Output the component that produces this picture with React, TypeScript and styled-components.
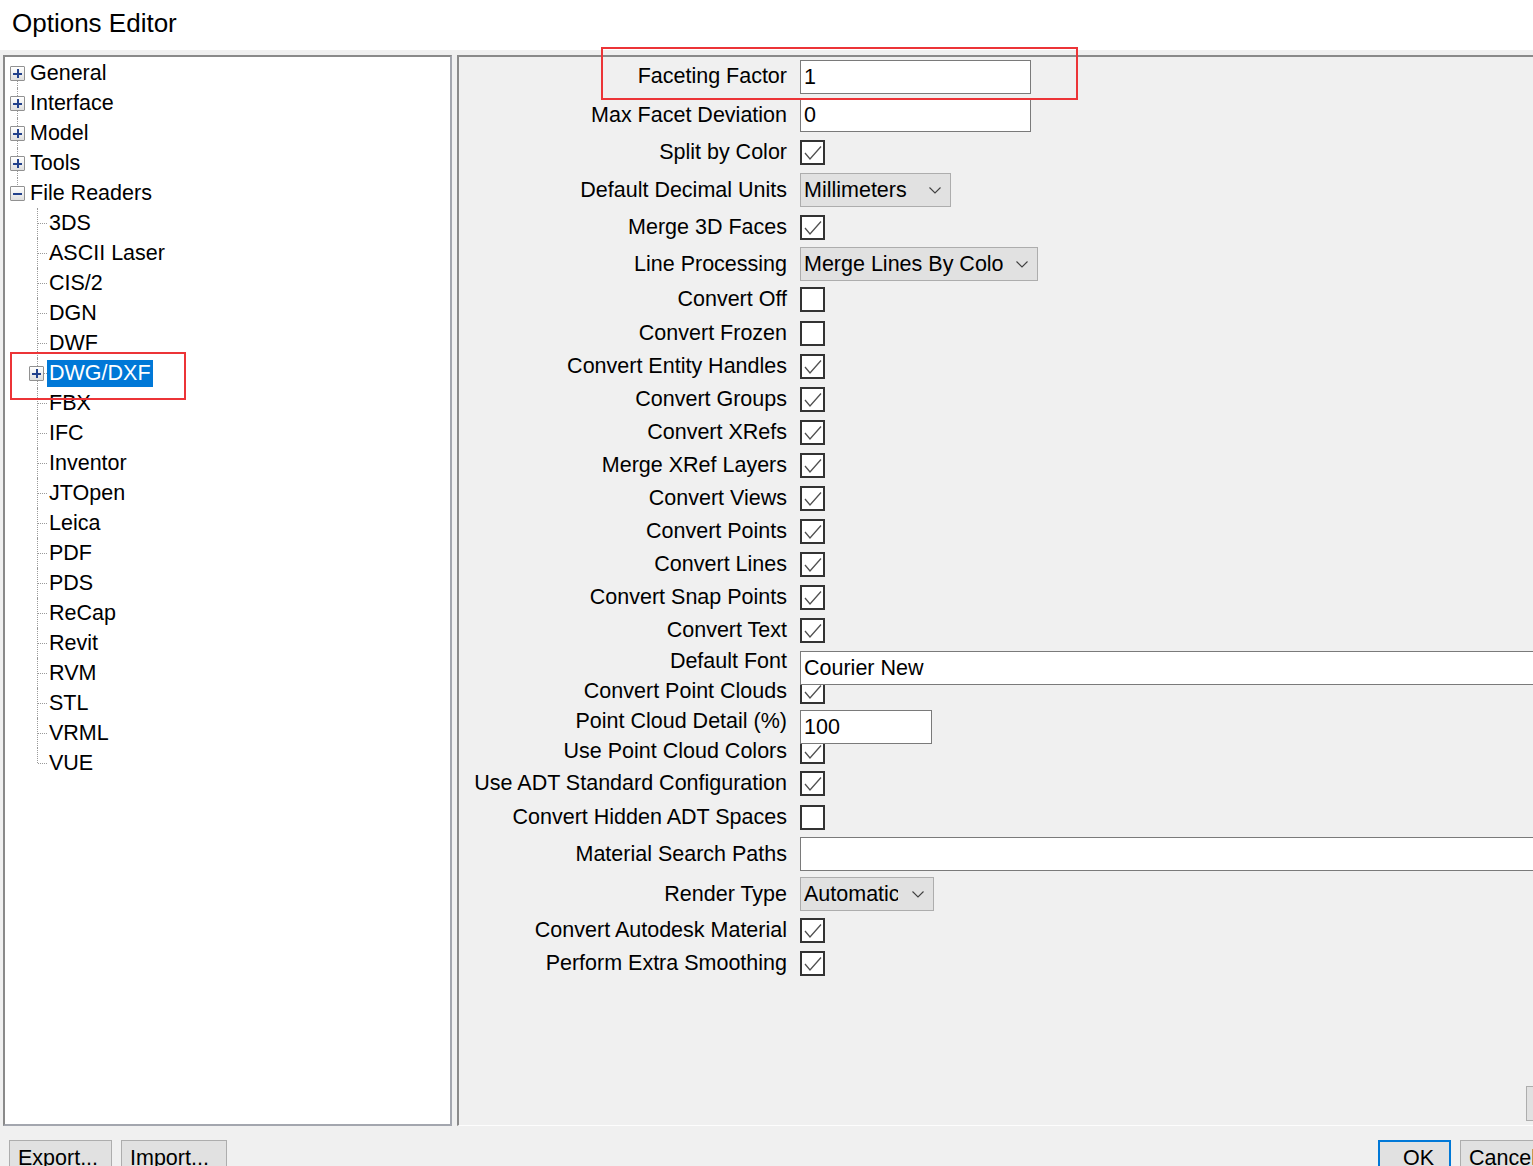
import React from "react";
import styled, { createGlobalStyle } from "styled-components";

const GlobalStyle = createGlobalStyle`
  html, body {
    margin: 0;
    padding: 0;
    overflow: hidden;
    background: #f0f0f0;
  }
  body {
    font-family: "Liberation Sans", Arial, sans-serif;
  }
`;

const UI_FONT = `"Liberation Sans", Arial, sans-serif`;

const Root = styled.div`
  position: relative;
  width: 1560px;
  height: 1166px;
  display: flex;
  flex-direction: column;
  background: #f0f0f0;
  font-family: ${UI_FONT};
  font-size: 21.5px;
  color: #000;
`;

const TitleBar = styled.header`
  flex: none;
  height: 50px;
  line-height: 46px;
  padding-left: 12px;
  background: #fff;
  font-size: 26px;
`;

const Panels = styled.div`
  flex: none;
  display: flex;
  gap: 5px;
  height: 1071px;
  margin-top: 5px;
  padding-left: 3px;
`;

/* ---------- tree ---------- */

const TreePanel = styled.div`
  flex: none;
  width: 449px;
  box-sizing: border-box;
  border: 2px solid;
  border-color: #8a8a8a #a3a6ae #a3a6ae #8a8a8a;
  background: #fff;
  padding-top: 1px;
`;

const TreeList = styled.ul`
  list-style: none;
  margin: 0;
  padding: 0;
`;

const TopItem = styled.li<{ $first?: boolean; $last?: boolean }>`
  position: relative;
  &::before {
    content: "";
    position: absolute;
    left: 12px;
    top: ${(p) => (p.$first ? "15px" : "0")};
    ${(p) => (p.$last ? "height: 15px;" : "bottom: 0;")}
    border-left: 1px dotted #9a9a9a;
  }
`;

const ChildItem = styled.li<{ $last?: boolean }>`
  position: relative;
  &::before {
    content: "";
    position: absolute;
    left: 32px;
    top: 0;
    ${(p) => (p.$last ? "height: 15px;" : "bottom: 0;")}
    border-left: 1px dotted #9a9a9a;
  }
  &::after {
    content: "";
    position: absolute;
    left: 33px;
    top: 15px;
    width: 9px;
    border-top: 1px dotted #9a9a9a;
  }
`;

const NodeRow = styled.div<{ $indent: number }>`
  position: relative;
  z-index: 1;
  display: flex;
  align-items: center;
  height: 30px;
  padding-left: ${(p) => p.$indent}px;
`;

const Expander = styled.span`
  display: inline-flex;
  width: 15px;
  height: 15px;
  box-sizing: border-box;
  border: 1px solid #919191;
  border-radius: 1px;
  background: linear-gradient(#ffffff, #dedede);
  flex: none;
`;

const ExpanderSpace = styled.span`
  width: 15px;
  flex: none;
`;

const NodeLabel = styled.span<{ $selected?: boolean }>`
  margin-left: 3px;
  padding: 0 2px;
  height: 27px;
  line-height: 27px;
  white-space: nowrap;
  background: ${(p) => (p.$selected ? "#0078d7" : "transparent")};
  color: ${(p) => (p.$selected ? "#fff" : "#000")};
`;

const ExpanderIcon = ({ open }: { open?: boolean }) => (
  <Expander>
    <svg width="13" height="13" viewBox="0 0 13 13" shapeRendering="crispEdges">
      <rect x="2" y="6" width="9" height="2" fill="#22418c" />
      {!open && <rect x="6" y="2" width="2" height="9" fill="#22418c" />}
    </svg>
  </Expander>
);

const topLevel = ["General", "Interface", "Model", "Tools"];
const readers = [
  "3DS",
  "ASCII Laser",
  "CIS/2",
  "DGN",
  "DWF",
  "DWG/DXF",
  "FBX",
  "IFC",
  "Inventor",
  "JTOpen",
  "Leica",
  "PDF",
  "PDS",
  "ReCap",
  "Revit",
  "RVM",
  "STL",
  "VRML",
  "VUE",
];

/* ---------- settings ---------- */

const SettingsPanel = styled.section`
  flex: 1;
  display: flex;
  flex-direction: column;
  border-left: 2px solid #8a8a8a;
  border-top: 2px solid #8a8a8a;
  border-bottom: 1px solid #fdfdfd;
  background: #f0f0f0;
`;

const Form = styled.div`
  display: flex;
  flex-direction: column;
`;

const SettingRow = styled.div<{ $h: number }>`
  display: grid;
  grid-template-columns: 328px 1fr;
  grid-template-rows: ${(p) => p.$h}px;
  column-gap: 13px;
  align-items: center;
  height: ${(p) => p.$h}px;
  flex: none;
`;

const Label = styled.label`
  text-align: right;
  white-space: nowrap;
`;

const ControlCell = styled.div`
  display: flex;
  align-items: center;
  height: 100%;
`;

const TextBox = styled.div<{ $w: number; $drop?: boolean }>`
  position: relative;
  z-index: 1;
  flex: none;
  width: ${(p) => p.$w}px;
  height: 34px;
  box-sizing: border-box;
  margin-top: ${(p) => (p.$drop ? "12px" : "0")};
  padding-left: 3px;
  border: 1px solid #7a7a7a;
  background: #fff;
  line-height: 32px;
  white-space: nowrap;
  overflow: hidden;
`;

const Select = styled.div<{ $w: number }>`
  display: flex;
  align-items: center;
  flex: none;
  width: ${(p) => p.$w}px;
  height: 34px;
  box-sizing: border-box;
  padding-left: 3px;
  border: 1px solid #adadad;
  background: #e1e1e1;
`;

const SelectText = styled.span<{ $clip: number }>`
  width: ${(p) => p.$clip}px;
  overflow: hidden;
  white-space: nowrap;
  line-height: 32px;
`;

const Chevron = styled.svg`
  margin-left: auto;
  margin-right: 9px;
  flex: none;
`;

const Box = styled.span`
  display: inline-flex;
  flex: none;
  width: 25px;
  height: 25px;
  box-sizing: border-box;
  border: 2px solid #333;
  background: #fff;
`;

const CheckBox = ({ checked }: { checked: boolean }) => (
  <Box>
    {checked && (
      <svg width="21" height="21" viewBox="0 0 21 21">
        <polyline
          points="3,11 8,17 19,4.5"
          fill="none"
          stroke="#505050"
          strokeWidth="1.3"
        />
      </svg>
    )}
  </Box>
);

type Setting =
  | { label: string; h: number; kind: "check"; checked: boolean }
  | { label: string; h: number; kind: "text"; value: string; w: number; drop?: boolean }
  | { label: string; h: number; kind: "select"; value: string; w: number; clip: number };

const settings: Setting[] = [
  { label: "Faceting Factor", h: 39, kind: "text", value: "1", w: 231 },
  { label: "Max Facet Deviation", h: 38, kind: "text", value: "0", w: 231 },
  { label: "Split by Color", h: 37, kind: "check", checked: true },
  { label: "Default Decimal Units", h: 38, kind: "select", value: "Millimeters", w: 151, clip: 118 },
  { label: "Merge 3D Faces", h: 37, kind: "check", checked: true },
  { label: "Line Processing", h: 36, kind: "select", value: "Merge Lines By Color", w: 238, clip: 199 },
  { label: "Convert Off", h: 35, kind: "check", checked: false },
  { label: "Convert Frozen", h: 33, kind: "check", checked: false },
  { label: "Convert Entity Handles", h: 33, kind: "check", checked: true },
  { label: "Convert Groups", h: 33, kind: "check", checked: true },
  { label: "Convert XRefs", h: 33, kind: "check", checked: true },
  { label: "Merge XRef Layers", h: 33, kind: "check", checked: true },
  { label: "Convert Views", h: 33, kind: "check", checked: true },
  { label: "Convert Points", h: 33, kind: "check", checked: true },
  { label: "Convert Lines", h: 33, kind: "check", checked: true },
  { label: "Convert Snap Points", h: 33, kind: "check", checked: true },
  { label: "Convert Text", h: 33, kind: "check", checked: true },
  { label: "Default Font", h: 29, kind: "text", value: "Courier New", w: 740, drop: true },
  { label: "Convert Point Clouds", h: 30, kind: "check", checked: true },
  { label: "Point Cloud Detail (%)", h: 30, kind: "text", value: "100", w: 132, drop: true },
  { label: "Use Point Cloud Colors", h: 31, kind: "check", checked: true },
  { label: "Use ADT Standard Configuration", h: 33, kind: "check", checked: true },
  { label: "Convert Hidden ADT Spaces", h: 34, kind: "check", checked: false },
  { label: "Material Search Paths", h: 40, kind: "text", value: "", w: 740 },
  { label: "Render Type", h: 40, kind: "select", value: "Automatic", w: 134, clip: 94 },
  { label: "Convert Autodesk Material", h: 32, kind: "check", checked: true },
  { label: "Perform Extra Smoothing", h: 34, kind: "check", checked: true },
];

const renderControl = (s: Setting) => {
  if (s.kind === "check") return <CheckBox checked={s.checked} />;
  if (s.kind === "text")
    return (
      <TextBox $w={s.w} $drop={s.drop}>
        {s.value}
      </TextBox>
    );
  return (
    <Select $w={s.w}>
      <SelectText $clip={s.clip}>{s.value}</SelectText>
      <Chevron width="12" height="7" viewBox="0 0 12 7">
        <polyline points="0.5,0.5 6,6 11.5,0.5" fill="none" stroke="#404040" strokeWidth="1.1" />
      </Chevron>
    </Select>
  );
};

const ApplyRow = styled.div`
  margin-top: auto;
  padding: 0 0 4px 1067px;
`;

/* ---------- buttons ---------- */

const Footer = styled.footer`
  flex: none;
  display: flex;
  gap: 9px;
  padding: 14px 12px 0 9px;
`;

const Button = styled.button<{ $w: number; $default?: boolean }>`
  width: ${(p) => p.$w}px;
  height: 36px;
  box-sizing: border-box;
  padding: 0 0 0 8px;
  text-align: ${(p) => (p.$default ? "center" : "left")};
  font-family: ${UI_FONT};
  font-size: 21.5px;
  color: #000;
  background: #e1e1e1;
  border: ${(p) => (p.$default ? "2px solid #0078d7" : "1px solid #adadad")};
  border-radius: 0;
  line-height: 32px;
  flex: none;
`;

const PanelButton = styled.div`
  width: 90px;
  height: 35px;
  box-sizing: border-box;
  border: 1px solid #adadad;
  background: #e1e1e1;
`;

const FooterEnd = styled.div`
  display: flex;
  gap: 9px;
  margin-left: auto;
`;

const Callout = styled.div<{ $x: number; $y: number; $w: number; $h: number }>`
  position: absolute;
  left: ${(p) => p.$x}px;
  top: ${(p) => p.$y}px;
  width: ${(p) => p.$w}px;
  height: ${(p) => p.$h}px;
  box-sizing: border-box;
  border: 2px solid #ec3437;
  pointer-events: none;
  z-index: 5;
`;

export default function App() {
  return (
    <Root>
      <GlobalStyle />
      <TitleBar>Options Editor</TitleBar>
      <Panels>
        <TreePanel>
          <TreeList>
            {topLevel.map((name, i) => (
              <TopItem key={name} $first={i === 0}>
                <NodeRow $indent={5}>
                  <ExpanderIcon />
                  <NodeLabel>{name}</NodeLabel>
                </NodeRow>
              </TopItem>
            ))}
            <TopItem $last>
              <NodeRow $indent={5}>
                <ExpanderIcon open />
                <NodeLabel>File Readers</NodeLabel>
              </NodeRow>
              <TreeList>
                {readers.map((name, i) => (
                  <ChildItem key={name} $last={i === readers.length - 1}>
                    <NodeRow $indent={24}>
                      {name === "DWG/DXF" ? <ExpanderIcon /> : <ExpanderSpace />}
                      <NodeLabel $selected={name === "DWG/DXF"}>{name}</NodeLabel>
                    </NodeRow>
                  </ChildItem>
                ))}
              </TreeList>
            </TopItem>
          </TreeList>
        </TreePanel>

        <SettingsPanel>
          <Form>
            {settings.map((s) => (
              <SettingRow key={s.label} $h={s.h}>
                <Label>{s.label}</Label>
                <ControlCell>{renderControl(s)}</ControlCell>
              </SettingRow>
            ))}
          </Form>
          <ApplyRow>
            <PanelButton />
          </ApplyRow>
        </SettingsPanel>
      </Panels>

      <Footer>
        <Button $w={103}>Export...</Button>
        <Button $w={106}>Import...</Button>
        <FooterEnd>
          <Button $w={73} $default>
            OK
          </Button>
          <Button $w={88}>Cancel</Button>
        </FooterEnd>
      </Footer>

      <Callout $x={601} $y={47} $w={477} $h={53} />
      <Callout $x={10} $y={352} $w={176} $h={48} />
    </Root>
  );
}
